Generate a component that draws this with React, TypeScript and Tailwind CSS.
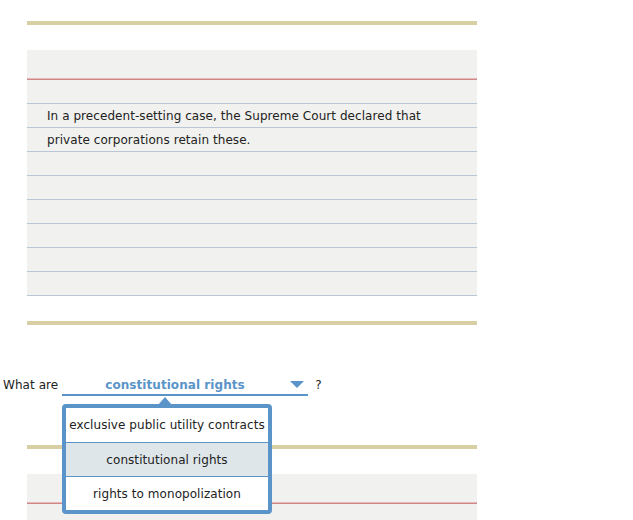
import React from "react";

const lines = Array.from({ length: 9 });

function Notebook({ text }: { text?: string[] }) {
  return (
    <div className="bg-[#f1f1ef]">
      <div className="h-[28px]" />
      <div className="h-px bg-[#e6b9b9]" />
      <div className="h-px bg-[#d08686]" />
      {lines.map((_, i) => (
        <div
          key={i}
          className="flex h-[24px] items-center border-b border-[#b9c6d6] pl-[20px] text-[#222]"
        >
          {text && i >= 1 && i - 1 < text.length ? text[i - 1] : null}
        </div>
      ))}
    </div>
  );
}

export default function App() {
  const options = [
    "exclusive public utility contracts",
    "constitutional rights",
    "rights to monopolization",
  ];
  return (
    <div className="relative h-[520px] w-[633px] overflow-hidden bg-white font-['DejaVu_Sans',sans-serif] text-[12px] tracking-[0.06px] text-[#222]">
      <div className="ml-[27px] w-[450px] pt-[21px]">
        <div className="h-[4px] bg-[#d9cfa4]" />
        <div className="mt-[25px]">
          <Notebook
            text={[
              "In a precedent-setting case, the Supreme Court declared that",
              "private corporations retain these.",
            ]}
          />
        </div>
        <div className="mt-[25px] h-[4px] bg-[#d9cfa4]" />
      </div>

      <div className="mt-[51px] flex items-end pl-[3px]">
        <span className="pb-[2px]">What are</span>
        <div className="relative ml-[4px] flex h-[20px] w-[246px] items-center border-b-2 border-[#5a94c8] pl-[43px]">
          <span className="font-bold text-[#5a94c8]">constitutional rights</span>
          <svg
            className="absolute right-[4px] top-[5px]"
            width="14"
            height="7"
            viewBox="0 0 14 7"
          >
            <path d="M0 0H14L7 7Z" fill="#5a94c8" />
          </svg>
        </div>
        <span className="ml-[7px] pb-[2px]">?</span>
      </div>

      <div className="ml-[27px] w-[450px]">
        <div className="mt-[49px] h-[4px] bg-[#d9cfa4]" />
        <div className="mt-[25px]">
          <Notebook />
        </div>
      </div>

      <div className="absolute left-[62px] top-[404px] w-[210px]">
        <svg
          className="absolute left-[96px] top-[-7px]"
          width="14"
          height="8"
          viewBox="0 0 14 8"
        >
          <path d="M0 8L7 0L14 8Z" fill="#5a94c8" />
        </svg>
        <div className="overflow-hidden rounded-[4px] border-4 border-[#5a94c8] bg-white">
          {options.map((o, i) => (
            <div
              key={o}
              className={
                "flex h-[34px] items-center justify-center text-[#222] " +
                (i === 1 ? "bg-[#dfe6ea] " : "") +
                (i > 0 ? "border-t border-[#5a94c8]" : "")
              }
            >
              {o}
            </div>
          ))}
        </div>
      </div>
    </div>
  );
}
